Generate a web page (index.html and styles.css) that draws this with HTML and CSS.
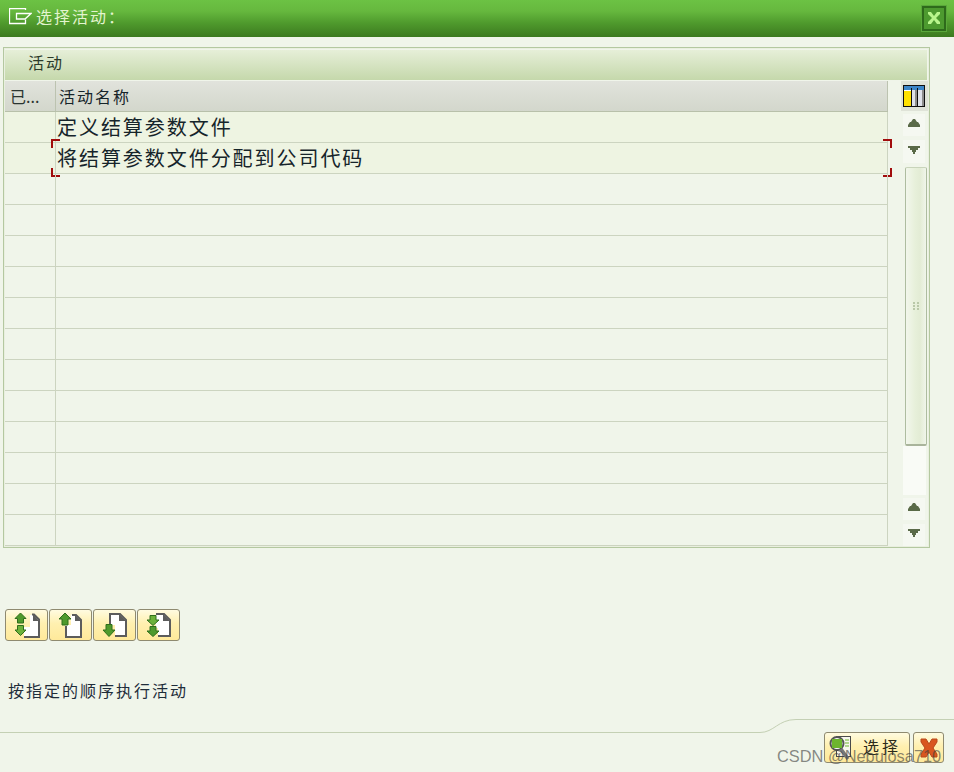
FILE: index.html
```html
<!DOCTYPE html>
<html lang="zh">
<head>
<meta charset="utf-8">
<title>选择活动</title>
<link rel="stylesheet" href="styles.css">
</head>
<body>
<div class="window">
  <header class="titlebar">
    <svg class="title-icon" width="23" height="17" viewBox="0 0 23 17"><path d="M16.500 2V.5H.5v15h16v-4" fill="none" stroke="#fff" stroke-width="1.300"/><path d="M7.500 5.500h14.500l-6 5.500H7.500z" fill="none" stroke="#fff" stroke-width="1.300"/></svg>
    <span class="title-text">选择活动：</span>
    <button class="title-close" aria-label="关闭">
      <svg width="16" height="16" viewBox="0 0 16 16"><path d="M2 2h3l3 4 3-4h3v2l-4 4 4 4v2h-3l-3-4-3 4H2v-2l4-4-4-4z" fill="#b9f58c"/></svg>
    </button>
  </header>

  <section class="frame">
    <div class="section-head">活动</div>
    <div class="table-wrap">
      <div class="table">
        <div class="row head"><div class="c1">已...</div><div class="c2">活动名称</div></div>
        <div class="row filled"><div class="c1"></div><div class="c2">定义结算参数文件</div></div>
        <div class="row filled focus"><div class="c1"></div><div class="c2">将结算参数文件分配到公司代码</div>
          <i class="br tl"></i><i class="br tr"></i><i class="br bl"></i><i class="br br2"></i>
        </div>
        <div class="row"><div class="c1"></div><div class="c2"></div></div>
        <div class="row"><div class="c1"></div><div class="c2"></div></div>
        <div class="row"><div class="c1"></div><div class="c2"></div></div>
        <div class="row"><div class="c1"></div><div class="c2"></div></div>
        <div class="row"><div class="c1"></div><div class="c2"></div></div>
        <div class="row"><div class="c1"></div><div class="c2"></div></div>
        <div class="row"><div class="c1"></div><div class="c2"></div></div>
        <div class="row"><div class="c1"></div><div class="c2"></div></div>
        <div class="row"><div class="c1"></div><div class="c2"></div></div>
        <div class="row"><div class="c1"></div><div class="c2"></div></div>
        <div class="row"><div class="c1"></div><div class="c2"></div></div>
        <div class="row"><div class="c1"></div><div class="c2"></div></div>
      </div>
      <div class="scroll">
        <div class="cfg">
          <svg width="22" height="22" viewBox="0 0 22 22"><rect x=".5" y=".5" width="21" height="21" fill="#fff" stroke="#101010"/><rect x="1" y="1" width="20" height="4" fill="#3c86c8"/><rect x="1" y="5" width="7" height="1" fill="#fff"/><rect x="1" y="6" width="7" height="15" fill="#ffe100"/><rect x="8" y="3" width="1" height="18" fill="#101010"/><rect x="9" y="5" width="3" height="16" fill="#dfe2ea"/><rect x="12" y="5" width="2" height="16" fill="#8c8c8c"/><rect x="14" y="3" width="1" height="18" fill="#101010"/><rect x="15" y="5" width="4" height="16" fill="#dfe2ea"/><rect x="19" y="5" width="2" height="16" fill="#8c8c8c"/></svg>
        </div>
        <div class="arrow a1"><svg width="16" height="8" viewBox="0 0 16 8"><path d="M7 0h2l2 3h1l2 3v2H2V6l2-3h1z" fill="#5a6a48"/></svg></div>
        <div class="arrow a2"><svg width="16" height="8" viewBox="0 0 16 8"><path d="M2 0h12v2h-2v2h-2v2H9v2H7V6H6V4H4V2H2z" fill="#5a6a48"/></svg></div>
        <div class="thumb">
          <svg width="8" height="10" viewBox="0 0 8 10"><path d="M1 1h2v2H1zM5 1h2v2H5zM1 4h2v2H1zM5 4h2v2H5zM1 7h2v2H1zM5 7h2v2H5z" fill="#b9c8a8"/></svg>
        </div>
        <div class="track"></div>
        <div class="arrow a3"><svg width="16" height="8" viewBox="0 0 16 8"><path d="M7 0h2l2 3h1l2 3v2H2V6l2-3h1z" fill="#5a6a48"/></svg></div>
        <div class="arrow a4"><svg width="16" height="8" viewBox="0 0 16 8"><path d="M2 0h12v2h-2v2h-2v2H9v2H7V6H6V4H4V2H2z" fill="#5a6a48"/></svg></div>
      </div>
    </div>
  </section>

  <div class="tools">
    <button class="tool" aria-label="全部向上">
      <svg width="41" height="30" viewBox="0 0 41 30"><path d="M24 5h4l5 5v17H18V17h6z" fill="#fff"/><path d="M26 4.500h2l5 5V27h-15" fill="none" stroke="#5c5c5c" stroke-width="2"/><path d="M27 4v7h6z" fill="#5c5c5c"/><path d="M14.500 3l5.500 5.500h-2.500V13h-6V8.500H9z" fill="#4f9a2c" stroke="#2f6e1c"/><path d="M11.500 15.500h6V20H20l-5.500 5.500L9 20h2.500z" fill="#6cb23a" stroke="#2f6e1c"/></svg>
    </button>
    <button class="tool" aria-label="向上">
      <svg width="41" height="30" viewBox="0 0 41 30"><path d="M21 5h5l5 5v17H15V15h6z" fill="#fff"/><path d="M22 5h4l5 5v17H16V16" fill="none" stroke="#5c5c5c" stroke-width="2"/><path d="M25 5v6h6z" fill="#5c5c5c"/><path d="M15 3l6 6h-3v6h-6V9H9z" fill="#4f9a2c" stroke="#2f6e1c"/></svg>
    </button>
    <button class="tool" aria-label="向下">
      <svg width="41" height="30" viewBox="0 0 41 30"><path d="M16 4h10l6 6v17H21V15h-5z" fill="#fff"/><path d="M16 14V4h10l6 6v16H21" fill="none" stroke="#5c5c5c" stroke-width="2"/><path d="M25 4v7h7z" fill="#5c5c5c"/><path d="M12 14.500h6V20h3l-6 6.500L9 20h3z" fill="#4f9a2c" stroke="#2f6e1c"/></svg>
    </button>
    <button class="tool" aria-label="全部向下">
      <svg width="41" height="30" viewBox="0 0 41 30"><path d="M18 4h8l6 6v17H20v-9h-2z" fill="#fff"/><path d="M18 4h8l6 6v16H20" fill="none" stroke="#5c5c5c" stroke-width="2"/><path d="M25 4v7h7z" fill="#5c5c5c"/><path d="M12 5.500h6V10h3l-6 5.500L9 10h3z" fill="#6cb23a" stroke="#2f6e1c"/><path d="M12 16.500h6V21h3l-6 5.500L9 21h3z" fill="#4f9a2c" stroke="#2f6e1c"/></svg>
    </button>
  </div>

  <p class="hint">按指定的顺序执行活动</p>

  <footer class="footer">
    <svg class="footer-line" width="954" height="20" viewBox="0 0 954 20"><path d="M0 13.500h760c14 0 18-13 36-13H954" fill="none" stroke="#c4d0b4"/></svg>
    <button class="act select">
      <svg width="28" height="28" viewBox="0 0 28 28"><rect x="9.500" y="2.500" width="14" height="20" fill="#f7f7ee" stroke="#4a4a4a"/><path d="M18 6h4M18 9h4M18 12h4" stroke="#6db52e"/><circle cx="10" cy="9.500" r="6.500" fill="#fff" stroke="#555" stroke-width="2"/><rect x="5" y="5" width="10" height="9" fill="#6db52e"/><path d="M14 15l7 10" stroke="#777" stroke-width="3.500"/></svg>
      <span>选择</span>
    </button>
    <button class="act cancel" aria-label="取消">
      <svg width="20" height="22" viewBox="0 0 20 22"><path d="M2 2h5l3 5 3-5h5v3l-4 6 4 6v3h-5l-3-5-3 5H2v-3l4-6-4-6z" fill="#d9561f" stroke="#b8481c"/></svg>
    </button>
  </footer>
  <div class="watermark">CSDN @Nebulosa710</div>
</div>
</body>
</html>
```
FILE: styles.css
```css
* { box-sizing: border-box; }
html, body { margin: 0; padding: 0; }
body {
  width: 954px;
  height: 772px;
  overflow: hidden;
  background: #f0f5ea;
  font-family: "Noto Sans CJK SC", "Liberation Sans", sans-serif;
  color: #1f2d2a;
}
button { padding: 0; font-family: inherit; cursor: default; }
.window { position: relative; width: 954px; height: 772px; }

.titlebar {
  height: 37px;
  display: flex;
  align-items: center;
  padding-left: 9px;
  background: linear-gradient(#6cc244 0%, #66b83e 30%, #4f9a2d 62%, #3c7a1f 100%);
}
.title-icon { margin-top: -5px; flex: none; }
.title-text {
  margin-left: 4px;
  margin-top: -5px;
  font-size: 16px;
  letter-spacing: 2px;
  color: #e4f4cf;
}
.title-close {
  margin-left: auto;
  margin-right: 8px;
  margin-top: -1px;
  width: 24px;
  height: 25px;
  display: flex;
  align-items: center;
  justify-content: center;
  background: #4d9a2f;
  border: 2px solid #2e6a1b;
  box-shadow: 0 0 0 1px #5aa83a;
}

.frame {
  width: 927px;
  height: 501px;
  margin: 10px 0 0 3px;
  padding: 2px 1px 1px 1px;
  border: 1px solid #b4c8a0;
  outline: 1px solid #e9efdf;
  outline-offset: -2px;
}
.section-head {
  height: 30px;
  margin-right: 1px;
  padding-left: 23px;
  font-size: 16px;
  letter-spacing: 2px;
  line-height: 25px;
  background: linear-gradient(#e6efd8, #c5d8ab);
  color: #2c3a2a;
}
.table-wrap { display: flex; margin-top: 1px; }
.table { width: 883px; flex: none; }
.row {
  display: flex;
  position: relative;
  height: 31px;
  border-bottom: 1px solid #ccd4c0;
}
.row.filled { background: #eef4e2; }
.c1 {
  width: 51px;
  flex: none;
  border-right: 1px solid #ccd4c0;
}
.c2 {
  flex: 1;
  border-right: 1px solid #ccd4c0;
  padding-left: 1px;
  font-size: 20px;
  letter-spacing: 1.95px;
  line-height: 29px;
  color: #16242a;
  white-space: nowrap;
}
.row.head {
  height: 31px;
  background: linear-gradient(#e1e3dc, #d3d7cc);
  border-bottom: 1px solid #b8c0aa;
  font-size: 16px;
  letter-spacing: 2px;
  line-height: 30px;
  color: #2b3530;
}
.row.head .c1 {
  padding-left: 5px;
  letter-spacing: 0;
  border-right: 1px solid #bcc3b0;
  background: linear-gradient(#e1e3dc, #d3d7cc);
}
.row.head .c2 {
  font-size: 16px;
  letter-spacing: 2px;
  line-height: 30px;
  padding-left: 3px;
  border-right: 1px solid #bcc3b0;
}
.br { position: absolute; width: 9px; height: 9px; border: 0 solid #a10c0c; }
.tl { left: 46px; top: -4px; border-width: 2px 0 0 2px; }
.tr { right: -4px; top: -4px; border-width: 2px 2px 0 0; }
.bl { left: 46px; bottom: -4px; border-width: 0 0 2px 2px; }
.br2 { right: -4px; bottom: -4px; border-width: 0 2px 2px 0; }

.scroll { width: 40px; flex: none; padding-left: 13px; display: flex; flex-direction: column; }
.cfg {
  width: 27px;
  height: 30px;
  display: flex;
  align-items: center;
  justify-content: center;
  background: #dfe3d8;
}
.cfg svg { margin-right: 1px; }
.arrow {
  width: 22px;
  margin-left: 2px;
  display: flex;
  align-items: center;
  justify-content: center;
  background: #f5f8f1;
}
.arrow svg { margin-top: -4px; }
.a1 { height: 22px; margin-top: 3px; }
.a2 { height: 23px; margin-top: 4px; }
.thumb {
  width: 22px;
  height: 279px;
  margin: 4px 0 0 4px;
  display: flex;
  align-items: center;
  justify-content: center;
  background: linear-gradient(90deg, #f2f6ec, #e7f0da 45%, #e3ecd5 70%, #f0f5ea);
  border: 1px solid #aebca0;
  border-top-color: #c8d4ba;
  border-bottom: 2px solid #a9b49b;
  border-radius: 2px;
}
.track { width: 23px; height: 49px; margin-left: 2px; background: #f9fbf6; }
.a3 { height: 22px; margin-top: 3px; }
.a4 { height: 22px; margin-top: 4px; }

.tools { display: flex; gap: 1px; margin: 61px 0 0 5px; }
.tool {
  width: 43px;
  height: 32px;
  display: flex;
  align-items: flex-start;
  justify-content: flex-start;
  border: 1px solid #8f8a70;
  border-radius: 3px;
  background: linear-gradient(#fffbe0, #fff0b0 45%, #ffe99a);
}
.hint {
  margin: 38px 0 0 8px;
  font-size: 16px;
  letter-spacing: 2px;
  line-height: 22px;
  color: #1f2d3a;
}

.footer {
  position: relative;
  height: 53px;
  margin-top: 18px;
  display: flex;
  justify-content: flex-end;
  align-items: flex-start;
  gap: 3px;
  padding: 13px 10px 0 0;
}
.footer-line { position: absolute; left: 0; top: 0; }
.act {
  position: relative;
  height: 31px;
  display: flex;
  align-items: center;
  border: 1px solid #8f8a70;
  border-radius: 3px;
  background: linear-gradient(#fffbe0, #fff0b0 45%, #ffe99a);
}
.select { width: 86px; padding-left: 2px; }
.select span { margin: -3px 0 0 8px; font-size: 16px; letter-spacing: 3px; color: #2b2a1a; }
.cancel { width: 31px; justify-content: center; }

.watermark {
  position: absolute;
  left: 777px;
  top: 747px;
  font-family: "Liberation Sans", sans-serif;
  font-size: 16.4px;
  white-space: nowrap;
  color: rgba(60, 60, 60, 0.6);
}
```
